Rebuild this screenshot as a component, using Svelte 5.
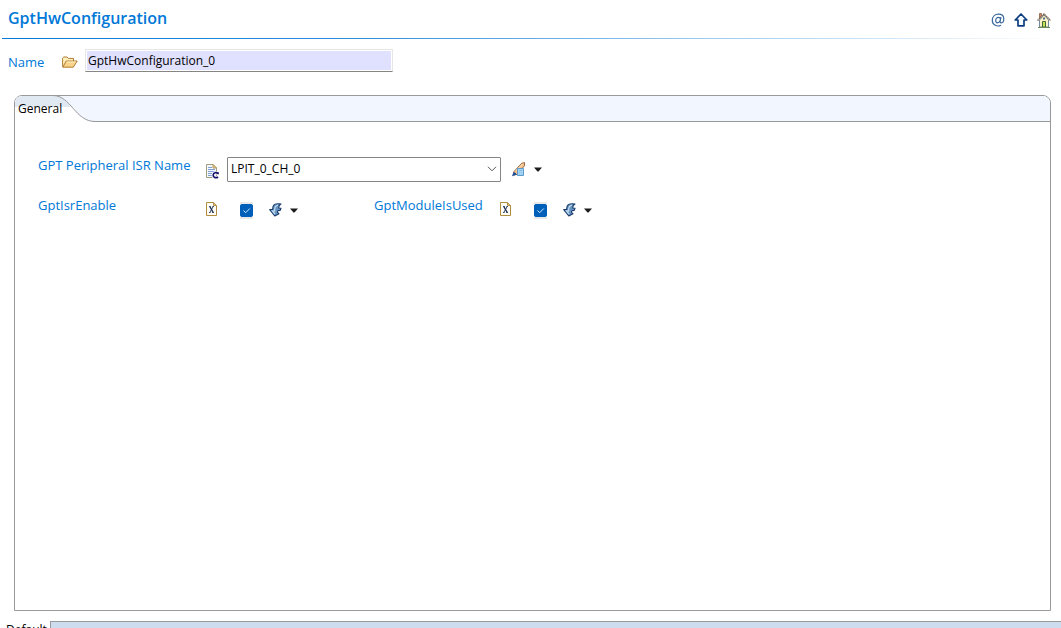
<script>
  let name = $state('GptHwConfiguration_0');
  let isr = $state('LPIT_0_CH_0');
  let flags = $state([
    { id: 'isr-enable', label: 'GptIsrEnable', checked: true },
    { id: 'module-used', label: 'GptModuleIsUsed', checked: true }
  ]);
</script>

{#snippet caret()}
  <svg class="caret" width="8" height="5" viewBox="0 0 8 5" aria-hidden="true">
    <path d="M0 .5H8L4.5 4.5H3.5Z" fill="#1c1c1c" />
  </svg>
{/snippet}

<div class="page">
  <header>
    <h1>GptHwConfiguration</h1>
    <nav aria-label="Page tools">
      <button type="button" aria-label="Reference">
        <svg width="14" height="14" viewBox="0 0 14 14" fill="none" stroke="#39689c" stroke-width="1.2">
          <path d="M10 12.2C6 14.2 1.3 12 1.3 7.5C1.3 3.6 4 1.2 7.4 1.2C10.8 1.2 12.8 3.2 12.8 6C12.8 8.4 11.6 9.8 10.2 9.8C9.2 9.8 9 9 9.2 8L10 4.2M9.5 6C9.2 4.8 8.5 4.3 7.5 4.3C5.8 4.3 4.7 5.8 4.7 7.6C4.7 9 5.4 9.8 6.5 9.8C8 9.8 9 8.4 9.5 6" />
        </svg>
      </button>
      <button type="button" aria-label="Up">
        <svg width="14" height="14" viewBox="0 0 14 14">
          <path d="M7 1L12.8 7H10V12.8H4V7H1.2Z" fill="#f4faff" stroke="#0c3c80" stroke-width="1.7" stroke-linejoin="round" />
        </svg>
      </button>
      <button type="button" aria-label="Home">
        <svg width="14" height="16" viewBox="0 0 14 16">
          <path d="M2.5 8L7 3L11.5 8V15H2.5Z" fill="#fdf3c8" stroke="#7188a0" />
          <path d="M2.5 1.5H4.5V4L2.5 6Z" fill="#d08a60" stroke="#7d5138" stroke-width=".7" />
          <path d="M.5 8.5L7 2L13.5 8.5" fill="none" stroke="#826a52" stroke-width="1.5" stroke-dasharray="1.5 .5" />
          <path d="M5.5 9.5H8.5V15H5.5Z" fill="#c9e455" stroke="#42683a" />
          <path d="M7 5.5V7.5" stroke="#344e78" stroke-width="1.6" />
          <path d="M1 15.5H13" stroke="#6d8c58" />
        </svg>
      </button>
    </nav>
  </header>

  <div class="name-row">
    <label for="config-name">Name</label>
    <svg width="16" height="12" viewBox="0 0 16 12" aria-hidden="true">
      <path d="M.6 10.8V2.2L1.8 1H5L6.3 2.4H11.5V5" fill="#fff1bd" stroke="#b17b34" stroke-linejoin="round" />
      <path d="M.8 11.2L4.2 5H15.2L11.3 11.2Z" fill="#f7d489" stroke="#b17b34" stroke-linejoin="round" />
      <path d="M4.8 6H13.5" stroke="#fff0c3" />
    </svg>
    <input id="config-name" type="text" bind:value={name} />
  </div>

  <main>
    <div class="tabs" role="tablist">
      <button type="button" class="tab" role="tab" aria-selected="true">
        <svg width="80" height="27" viewBox="0 0 80 27" aria-hidden="true">
          <path d="M0 27V0H38C56 0 60 26.5 80 26.5V27Z" fill="#fff" />
          <path d="M0 12V0H38C47 0 51 6 56 12Z" fill="#e0e8f2" />
          <path d="M36 .5H38C56 .5 60 26.5 80 26.5" fill="none" stroke="#999" />
        </svg>
        <span>General</span>
      </button>
    </div>

    <div class="form" role="tabpanel" aria-label="General">
      <div class="row">
        <label class="caption" for="isr-name">GPT Peripheral ISR Name</label>
        <svg class="type" width="13" height="15" viewBox="0 0 13 15" aria-hidden="true">
          <path d="M.5 .5H7L10.5 4V13.5H.5Z" fill="#f5f9ff" stroke="#a39c7c" />
          <path d="M7 .5V4H10.5Z" fill="#efd28d" stroke="#b39a5a" />
          <path d="M2 3.5H6M2 5.5H9M2 7.5H9M2 9.5H6M2 11.5H6" stroke="#7f9fd4" />
          <path d="M12 9.6C10.5 8.1 7.2 8.4 7.2 11.2C7.2 14 10.5 14.3 12 12.8" fill="none" stroke="#fff" stroke-width="3" />
          <path d="M12 9.6C10.5 8.1 7.2 8.4 7.2 11.2C7.2 14 10.5 14.3 12 12.8M12 8.2V10.2" fill="none" stroke="#12126c" stroke-width="1.7" />
        </svg>
        <div class="combo">
          <select id="isr-name" bind:value={isr}>
            <option>LPIT_0_CH_0</option>
          </select>
          <svg width="10" height="6" viewBox="0 0 10 6" aria-hidden="true">
            <path d="M1 .8L5 4.8L9 .8" fill="none" stroke="#555" />
          </svg>
        </div>
        <button type="button" class="menu" aria-label="Edit value">
          <svg width="14" height="15" viewBox="0 0 14 15">
            <path d="M2 9.5L9.8 1.2L12.5 .6V3.8L5 12.4L1.5 13Z" fill="#f4c08a" stroke="#8f5a35" stroke-width=".9" />
            <path d="M3.5 9.2L10.8 1.8" stroke="#ffe5bd" />
            <path d="M0 14.3L1.4 10.2C3 10 4.3 11.2 4.4 12.8Z" fill="#1c4f96" />
            <path d="M5.5 6.5H11.5V13.5H5.5Z" fill="#a6d4f2" stroke="#5d9bcc" />
            <path d="M7 8.5H10" stroke="#7fbbe3" />
            <path d="M7 10.5H10.5M7 12.3H10.5" stroke="#8cc3e8" stroke-dasharray="1 1" />
          </svg>
          {@render caret()}
        </button>
      </div>

      <div class="flags">
        {#each flags as flag (flag.id)}
          <div class="row">
            <label class="caption" for={flag.id}>{flag.label}</label>
            <svg class="type" width="12" height="14" viewBox="0 0 12 14" aria-hidden="true">
              <path d="M.5 .5H7.5L10.5 3.5V13.5H.5Z" fill="#fffdf5" stroke="#b08d3c" />
              <path d="M7.5 .5V3.5H10.5Z" fill="#edcf7c" stroke="#b4914b" />
              <path d="M3.8 4.5L7.2 10.5" stroke="#1d3359" stroke-width="1.5" />
              <path d="M7.2 4.5L3.8 10.5" stroke="#1d3359" stroke-width=".9" />
              <path d="M3 4.5H4.8M6.4 4.5H8M3 10.5H4.6M6.2 10.5H8" stroke="#1d3359" stroke-width=".8" />
            </svg>
            <span class="check">
              <input id={flag.id} type="checkbox" bind:checked={flag.checked} />
              {#if flag.checked}
                <svg width="13" height="13" viewBox="0 0 13 13" aria-hidden="true">
                  <path d="M3.5 6.5L5.7 8.7L9.8 4.5" fill="none" stroke="#d5eaff" />
                </svg>
              {/if}
            </span>
            <button type="button" class="menu" aria-label="{flag.label} options">
              <svg width="13" height="14" viewBox="0 0 13 14">
                <path d="M12 1C8.5 .4 4.8 1.2 4 3.6L3.6 6.6H.7L5.8 13L10 10.8L8.4 9.2L8.8 7.8L11.2 7.4L12 5.2L9.9 5C9.5 3.4 10.2 2 12 1Z" fill="#6793c2" stroke="#1a3d6b" stroke-width="1.1" stroke-linejoin="round" />
                <path d="M9 2.2C6.4 2.6 5.4 4.4 5.6 8H3.4L6 11.2" fill="none" stroke="#bcd9ef" stroke-width="1.3" />
              </svg>
              {@render caret()}
            </button>
          </div>
        {/each}
      </div>
    </div>
  </main>

  <footer>
    <span>Default</span>
    <div class="strip"></div>
  </footer>
</div>

<style>
  :global(body) {
    margin: 0;
    background: #fff;
  }
  * {
    box-sizing: border-box;
  }
  .page {
    display: flex;
    flex-direction: column;
    height: 100vh;
    overflow: hidden;
    font: 13px/18px "Open Sans", "Noto Sans", sans-serif;
    color: #000;
  }
  svg {
    display: block;
    flex: none;
  }
  button {
    padding: 0;
    border: 0;
    background: none;
    font: inherit;
    color: inherit;
  }
  header {
    display: flex;
    justify-content: space-between;
    align-items: center;
    flex: none;
    height: 39px;
    margin: 0 8px 0 2px;
    padding: 0 2px 0 6px;
    background: linear-gradient(90deg, #0878d8, #2f8fdf 35%, #a5cff1 70%, #fff) bottom / 100% 1px no-repeat;
  }
  h1 {
    margin: 0 0 4px;
    font-size: 16px;
    line-height: 20px;
    font-weight: 600;
    color: #0078d7;
  }
  nav {
    display: flex;
    align-items: center;
    gap: 9px;
    padding-top: 1px;
  }
  .name-row {
    display: flex;
    align-items: center;
    flex: none;
    margin: 10px 8px 0;
    height: 24px;
  }
  label {
    color: #0078d7;
  }
  .name-row label {
    width: 54px;
    padding-top: 2px;
  }
  .name-row svg {
    margin-top: 2px;
  }
  .name-row input {
    width: 308px;
    height: 23px;
    margin: 0 0 2px 7px;
    padding: 0 2px;
    border: 1px solid #e6e6e6;
    border-bottom-color: #858585;
    outline: 0;
    background: #e0e0ff;
    box-shadow: inset 0 0 0 1px #fff;
    font: inherit;
    font-size: 12px;
  }
  main {
    display: flex;
    flex-direction: column;
    flex: 1;
    min-height: 0;
    margin: 22px 10px 10px 14px;
    border: 1px solid #999;
    border-radius: 8px 8px 0 0;
    overflow: hidden;
  }
  .tabs {
    height: 26px;
    flex: none;
    border-bottom: 1px solid #999;
    background: #f2f6fe;
  }
  .tab {
    display: grid;
    height: 26px;
    margin-top: -1px;
    font-size: 12px;
  }
  .tab > * {
    grid-area: 1 / 1;
  }
  .tab span {
    justify-self: start;
    padding: 5px 3px 3px;
  }
  .form {
    display: flex;
    flex-direction: column;
    gap: 14px;
    padding: 34px 23px;
  }
  .row {
    display: flex;
    align-items: center;
    height: 26px;
  }
  .caption {
    width: 168px;
    padding-bottom: 8px;
  }
  .type {
    margin-top: 5px;
  }
  .combo {
    display: grid;
    align-items: center;
    width: 274px;
    margin: 0 11px 0 8px;
  }
  .combo > * {
    grid-area: 1 / 1;
  }
  .combo svg {
    justify-self: end;
    margin-right: 4px;
    pointer-events: none;
  }
  select {
    appearance: none;
    width: 100%;
    height: 25px;
    padding: 0 20px 0 3px;
    border: 1px solid #858585;
    border-radius: 1px;
    background: #fff;
    color: #000;
    font: inherit;
    font-size: 12px;
  }
  .menu {
    display: flex;
    align-items: center;
    gap: 8px;
  }
  .flags {
    display: flex;
  }
  .flags .row {
    width: 336px;
  }
  .flags .row + .row .caption {
    width: 126px;
  }
  .flags .type {
    margin-top: 0;
  }
  .flags .menu {
    margin-top: 2px;
  }
  .check {
    display: grid;
    place-items: center;
    width: 13px;
    height: 17px;
    margin: 2px 16px 0 22px;
    background: #e8e8e8;
  }
  .check > * {
    grid-area: 1 / 1;
  }
  .check svg {
    pointer-events: none;
  }
  .check input {
    appearance: none;
    width: 13px;
    height: 13px;
    margin: 0;
    border: 1px solid #005fb8;
    border-radius: 2px;
    background: #fff;
  }
  .check input:checked {
    background: #005fb8;
  }
  footer {
    display: flex;
    flex: none;
    height: 7px;
  }
  footer span {
    width: 50px;
    padding-left: 6px;
    font-size: 12px;
  }
  .strip {
    flex: 1;
    border: solid #999;
    border-width: 1px 0 0 1px;
    background: #cddcee;
  }
</style>
